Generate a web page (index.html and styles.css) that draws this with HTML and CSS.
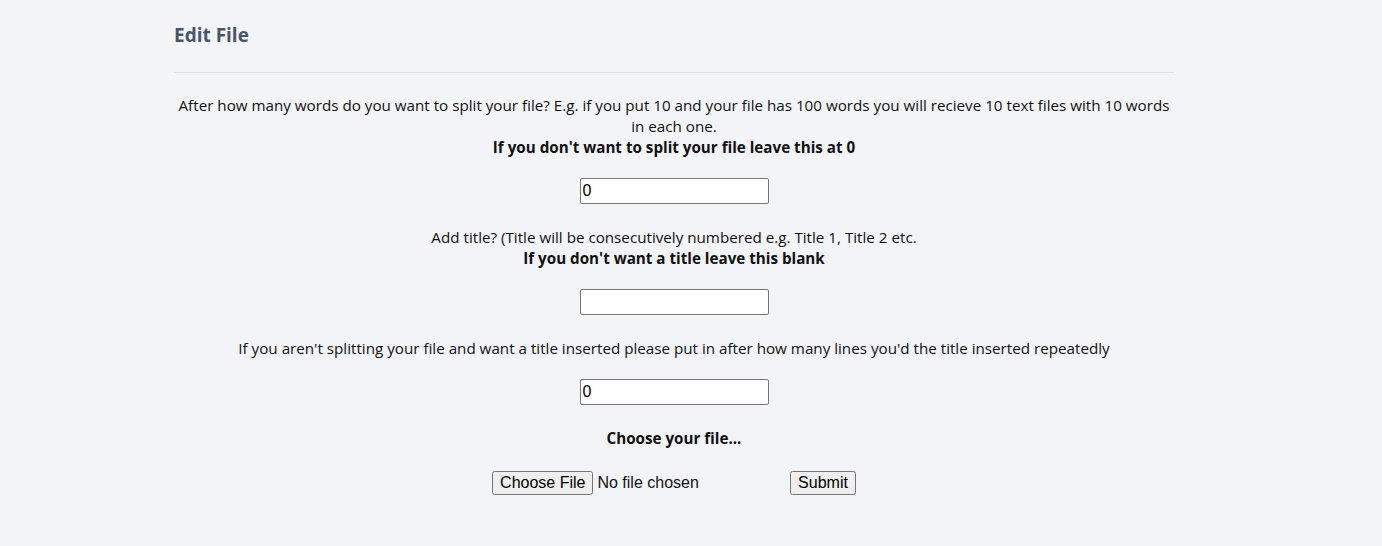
FILE: index.html
```html
<!DOCTYPE html>
<html>
<head>
<meta charset="utf-8">
<link rel="stylesheet" href="styles.css">
</head>
<body>
<div class="page">
  <header class="head">
    <h1 class="title">Edit File</h1>
  </header>
  <form class="form">
    <p class="text">After how many words do you want to split your file? E.g. if you put 10 and your file has 100 words you will recieve 10 text files with 10 words in each one.<br><b>If you don't want to split your file leave this at 0</b></p>
    <input class="field" type="text" value="0">
    <p class="text">Add title? (Title will be consecutively numbered e.g. Title 1, Title 2 etc.<br><b>If you don't want a title leave this blank</b></p>
    <input class="field" type="text" value="">
    <p class="text">If you aren't splitting your file and want a title inserted please put in after how many lines you'd the title inserted repeatedly</p>
    <input class="field" type="text" value="0">
    <p class="text"><b>Choose your file...</b></p>
    <div class="row">
      <input class="file" type="file">
      <input class="btn" type="submit" value="Submit">
    </div>
  </form>
</div>
</body>
</html>
```

FILE: styles.css
```css
html, body {
  margin: 0;
  padding: 0;
  background: #f3f4f8;
}
body {
  font-family: "Open Sans", "Noto Sans", sans-serif;
  color: #111;
}
.page {
  width: 1000px;
  margin: 0 0 0 174px;
}
.head {
  padding: 23px 0 25px;
  border-bottom: 1px solid #e0e1e6;
}
.title {
  margin: 0;
  font-size: 19px;
  line-height: 24px;
  font-weight: 700;
  color: #4a5568;
}
.form {
  display: flex;
  flex-direction: column;
  align-items: center;
  padding-top: 22px;
}
.text {
  margin: 0;
  font-size: 15.2px;
  line-height: 21px;
  text-align: center;
}
.text b {
  font-weight: 700;
}
.field {
  box-sizing: border-box;
  width: 189px;
  height: 26px;
  margin: 20px 0 23px;
  padding: 0 2px;
  border: 1px solid #767676;
  border-radius: 2px;
  background: #fff;
  font-family: "Liberation Sans", Arial, sans-serif;
  font-size: 16px;
}
.row {
  display: flex;
  align-items: center;
  margin-top: 22px;
}
.file {
  width: 298px;
  font-family: "Liberation Sans", Arial, sans-serif;
  font-size: 16px;
}
.btn {
  font-family: "Liberation Sans", Arial, sans-serif;
  font-size: 16px;
}
```
